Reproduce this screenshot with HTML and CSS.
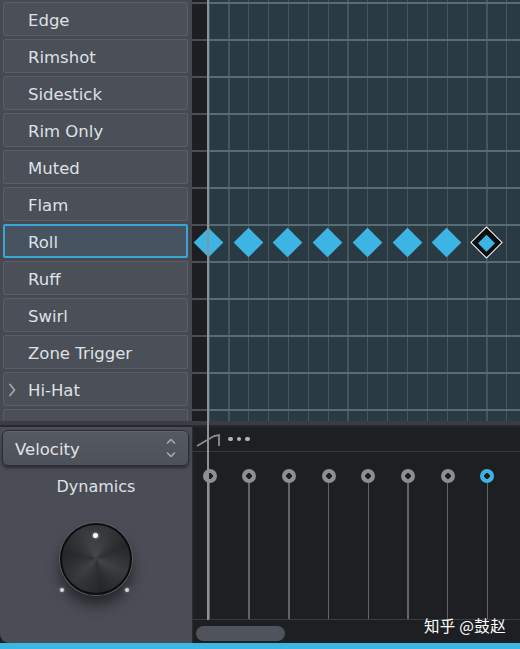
FILE: index.html
```html
<!DOCTYPE html>
<html>
<head>
<meta charset="utf-8">
<link rel="stylesheet" href="styles.css">
</head>
<body>
<div class="app">
  <section class="top">
    <div class="lanes">
      <div class="lane">Edge</div>
      <div class="lane">Rimshot</div>
      <div class="lane">Sidestick</div>
      <div class="lane">Rim Only</div>
      <div class="lane">Muted</div>
      <div class="lane">Flam</div>
      <div class="lane sel">Roll</div>
      <div class="lane">Ruff</div>
      <div class="lane">Swirl</div>
      <div class="lane">Zone Trigger</div>
      <div class="lane group"><svg class="chev" width="8" height="14" viewBox="0 0 8 14"><path d="M2 1.5 L6.5 7 L2 12.5" fill="none" stroke="#a3a7ad" stroke-width="1.8" stroke-linecap="round" stroke-linejoin="round"/></svg>Hi-Hat</div>
      <div class="lane"></div>
    </div>
    <div class="roll">
      <div class="gutter"></div>
      <div class="grid"></div>
      <div class="note" style="left:6px"></div>
      <div class="note" style="left:45.7px"></div>
      <div class="note" style="left:85.4px"></div>
      <div class="note" style="left:125.1px"></div>
      <div class="note" style="left:164.8px"></div>
      <div class="note" style="left:204.5px"></div>
      <div class="note" style="left:244.2px"></div>
      <div class="note selected" style="left:282.9px"><div class="core"></div></div>
    </div>
  </section>
  <div class="divider"></div>
  <section class="bottom">
    <div class="controls">
      <div class="select">
        <span>Velocity</span>
        <svg width="10" height="22" viewBox="0 0 10 22"><path d="M1.5 6 L5 2.5 L8.5 6 M1.5 16 L5 19.5 L8.5 16" fill="none" stroke="#a9adb3" stroke-width="1.6" stroke-linecap="round" stroke-linejoin="round"/></svg>
      </div>
      <div class="dyn-label">Dynamics</div>
      <div class="knob-wrap">
        <div class="knob"><div class="indicator"></div></div>
        <div class="tick left"></div>
        <div class="tick right"></div>
      </div>
    </div>
    <div class="vel">
      <div class="vel-head">
        <svg width="26" height="16" viewBox="0 0 26 16"><path d="M1 14 L18 4 L23 3 L23 14" fill="none" stroke="#8d8e91" stroke-width="1.8" stroke-linejoin="miter"/></svg>
        <span class="dot"></span><span class="dot"></span><span class="dot"></span>
      </div>
      <div class="vel-body">
        <div class="stem" style="left:9.5px"></div>
        <div class="stem" style="left:49.2px"></div>
        <div class="stem" style="left:88.9px"></div>
        <div class="stem" style="left:128.6px"></div>
        <div class="stem" style="left:168.3px"></div>
        <div class="stem" style="left:208px"></div>
        <div class="stem" style="left:247.7px"></div>
        <div class="stem active" style="left:287.4px"></div>
      </div>
      <div class="scroll"><div class="thumb"></div></div>
    </div>
  </section>
  <div class="bluebar"></div>
  <div class="playhead"></div>
  <div class="watermark">知乎 @鼓赵</div>
</div>
</body>
</html>
```
FILE: styles.css
```css
* { box-sizing: border-box; }
html, body { margin: 0; padding: 0; }
body {
  width: 520px;
  height: 649px;
  overflow: hidden;
  background: #1e1f23;
  font-family: "DejaVu Sans", Verdana, sans-serif;
  color: #dfe1e5;
}
.app {
  position: relative;
  width: 520px;
  height: 649px;
  display: flex;
  flex-direction: column;
}
.top {
  height: 421px;
  display: grid;
  grid-template-columns: 192px 1fr;
  overflow: hidden;
}
.lanes {
  background: #464950;
  padding: 2px 4px 0 3px;
  display: flex;
  flex-direction: column;
  gap: 3px;
  overflow: hidden;
}
.lane {
  flex: 0 0 34px;
  height: 34px;
  border: 1px solid #5a5e66;
  border-radius: 2px;
  background: #4b4f57;
  padding: 3px 0 0 24px;
  display: flex;
  align-items: center;
  font-size: 16.5px;
  color: #dfe1e5;
}
.lane.sel {
  border: 2px solid #38a6d6;
  padding: 2px 0 0 23px;
  background: #475360;
}
.lane.group { padding-left: 4px; }
.chev { margin-right: 12px; margin-top: -1px; }

.roll {
  position: relative;
  display: grid;
  grid-template-columns: 15px 1fr;
}
.gutter {
  background:
    repeating-linear-gradient(180deg, transparent 0 2px, #4b4e54 2px 4px, transparent 4px 37px),
    #1d1e21;
}
.grid {
  background:
    repeating-linear-gradient(180deg, transparent 0 2px, #586c73 2px 4px, transparent 4px 37px),
    repeating-linear-gradient(90deg, transparent 0 1.5px, #44575e 1.5px 2.7px, transparent 2.7px 19.85px),
    #2a3a42;
}
.note {
  position: absolute;
  top: 232px;
  width: 21px;
  height: 21px;
  background: #3cb5e5;
  transform: rotate(45deg);
}
.note.selected {
  top: 231px;
  width: 23px;
  height: 23px;
  background: #0c0d0e;
  border: 1.6px solid #ffffff;
  display: flex;
  align-items: center;
  justify-content: center;
}
.note .core {
  width: 12px;
  height: 12px;
  background: #3cb5e5;
}

.divider {
  height: 6px;
  background: #3a3d42;
  border-bottom: 2px solid #26282c;
}

.bottom {
  height: 216px;
  display: grid;
  grid-template-columns: 192px 1fr;
}
.controls {
  background: #4a4d55;
  border-bottom-left-radius: 9px;
  padding: 3px 3px 0 2px;
  display: flex;
  flex-direction: column;
  align-items: stretch;
}
.select {
  height: 36px;
  border: 1px solid #2c2e33;
  border-radius: 6px;
  background: linear-gradient(#555961, #4d5159);
  box-shadow: 0 2px 3px rgba(0,0,0,0.45), inset 0 1px 0 rgba(255,255,255,0.07);
  display: flex;
  align-items: center;
  justify-content: space-between;
  padding: 0 12px 0 12px;
  font-size: 16.5px;
  color: #e1e3e7;
}
.select span { padding-top: 3px; }
.dyn-label {
  margin-top: 11px;
  line-height: 20px;
  text-align: center;
  font-size: 16px;
  color: #dfe1e5;
  padding-left: 1px;
}
.knob-wrap {
  position: relative;
  width: 72px;
  height: 72px;
  margin: 26px auto 0;
}
.knob {
  width: 72px;
  height: 72px;
  border-radius: 50%;
  border: 2px solid #0d0d0f;
  background:
    radial-gradient(circle at 50% 50%, rgba(255,255,255,0.03), rgba(0,0,0,0.15) 70%),
    conic-gradient(from 20deg, #3f4043, #2c2d30 45deg, #414246 95deg, #2a2b2e 150deg, #3e3f42 205deg, #2b2c2f 260deg, #404145 315deg, #3f4043);
  box-shadow: 0 0 0 1px #5a5d63, 0 10px 14px rgba(0,0,0,0.5);
  position: relative;
}
.indicator {
  position: absolute;
  left: 31.5px;
  top: 8px;
  width: 5px;
  height: 5px;
  border-radius: 50%;
  background: #ffffff;
  box-shadow: 0 0 3px rgba(255,255,255,0.7);
}
.tick {
  position: absolute;
  top: 65px;
  width: 4px;
  height: 4px;
  border-radius: 50%;
  background: #d4d6da;
  box-shadow: 0 0 3px rgba(255,255,255,0.5);
}
.tick.left { left: 0px; }
.tick.right { left: 65px; }

.vel {
  background: #1e1f23;
  display: flex;
  flex-direction: column;
  border-left: 1px solid #2a2c30;
}
.vel-head {
  height: 25px;
  border-bottom: 1px solid #34373c;
  display: flex;
  align-items: center;
  padding-left: 3px;
  gap: 4px;
}
.vel-head svg { margin-right: 2px; margin-top: 1px; }
.dot {
  width: 4.5px;
  height: 4.5px;
  border-radius: 50%;
  background: #b3b4b7;
}
.vel-body {
  position: relative;
  height: 168px;
  border-bottom: 1px solid #393c41;
}
.stem {
  position: absolute;
  top: 17px;
  bottom: 0;
  width: 14px;
  display: flex;
  justify-content: center;
}
.stem::before {
  content: "";
  width: 1.5px;
  height: 100%;
  background: #626367;
}
.stem::after {
  content: "";
  position: absolute;
  top: 0;
  left: 0;
  width: 14px;
  height: 14px;
  border-radius: 50%;
  background: radial-gradient(circle, #1e1f23 0 2.6px, #8e8f92 3px);
}
.stem.active::after {
  background: radial-gradient(circle, #1e1f23 0 2.6px, #3cb5e5 3px);
}
.scroll {
  flex: 1;
  padding: 6px 0 0 3px;
}
.thumb {
  width: 89px;
  height: 15px;
  border-radius: 8px;
  background: #4f535b;
}
.bluebar {
  height: 6px;
  background: #3db5e5;
}
.playhead {
  position: absolute;
  left: 207px;
  top: 0;
  width: 2px;
  height: 620px;
  background: #8e9296;
}
.watermark {
  position: absolute;
  left: 424px;
  top: 614px;
  font-family: "Noto Sans CJK SC", "Noto Sans", sans-serif;
  font-size: 15.5px;
  color: #ffffff;
  letter-spacing: 0.3px;
}
```
